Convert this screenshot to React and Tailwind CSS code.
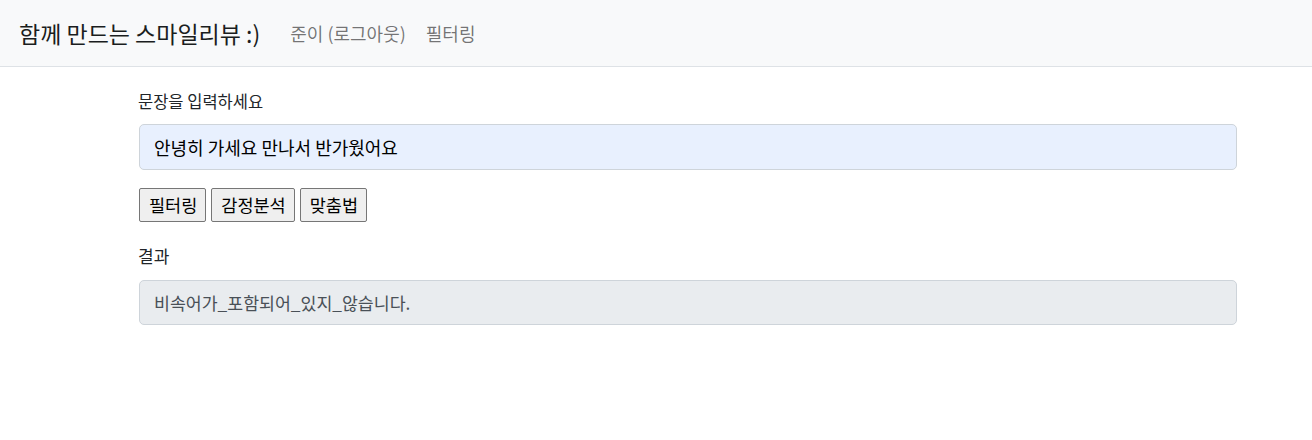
export default function App() {
  const font = { fontFamily: '"Noto Sans CJK KR", "Noto Sans", sans-serif' };
  return (
    <div className="w-[1312px] h-[440px] bg-white text-[#212529]" style={font}>
      <nav className="h-[67px] bg-[#f8f9fa] border-b border-[#dee2e6] flex items-center pl-[19px]">
        <span className="text-[23px] text-[#1a1d20] leading-none">함께 만드는 스마일리뷰 :)</span>
        <span className="ml-[30px] text-[18px] text-[#000000]/55 leading-none">준이 (로그아웃)</span>
        <span className="ml-[20px] text-[18px] text-[#000000]/55 leading-none">필터링</span>
      </nav>
      <div className="pl-[139px] w-[1237px] flex flex-col">
        <div className="mt-[22px] text-[16.5px] leading-[24px] -ml-px">문장을 입력하세요</div>
        <div className="mt-[11px] h-[46px] rounded-[5px] border border-[#ced4da] bg-[#e8f0fe] flex items-center pl-[14px] text-[18px] text-black">
          안녕히 가세요 만나서 반가웠어요
        </div>
        <div className="mt-[18px] flex gap-[5px]">
          {["필터링", "감정분석", "맞춤법"].map((t) => (
            <button
              key={t}
              className="h-[34px] pl-[9px] pr-[8px] bg-[#efefef] border border-[#767676] rounded-[2px] text-[17.5px] text-black leading-none"
              style={font}
            >
              {t}
            </button>
          ))}
        </div>
        <div className="mt-[22px] text-[17px] leading-[24px] -ml-px">결과</div>
        <div className="mt-[12px] h-[45px] rounded-[5px] border border-[#ced4da] bg-[#e9ecef] flex items-center pl-[14px] text-[17.3px] text-[#495057]">
          비속어가_포함되어_있지_않습니다.
        </div>
      </div>
    </div>
  );
}
